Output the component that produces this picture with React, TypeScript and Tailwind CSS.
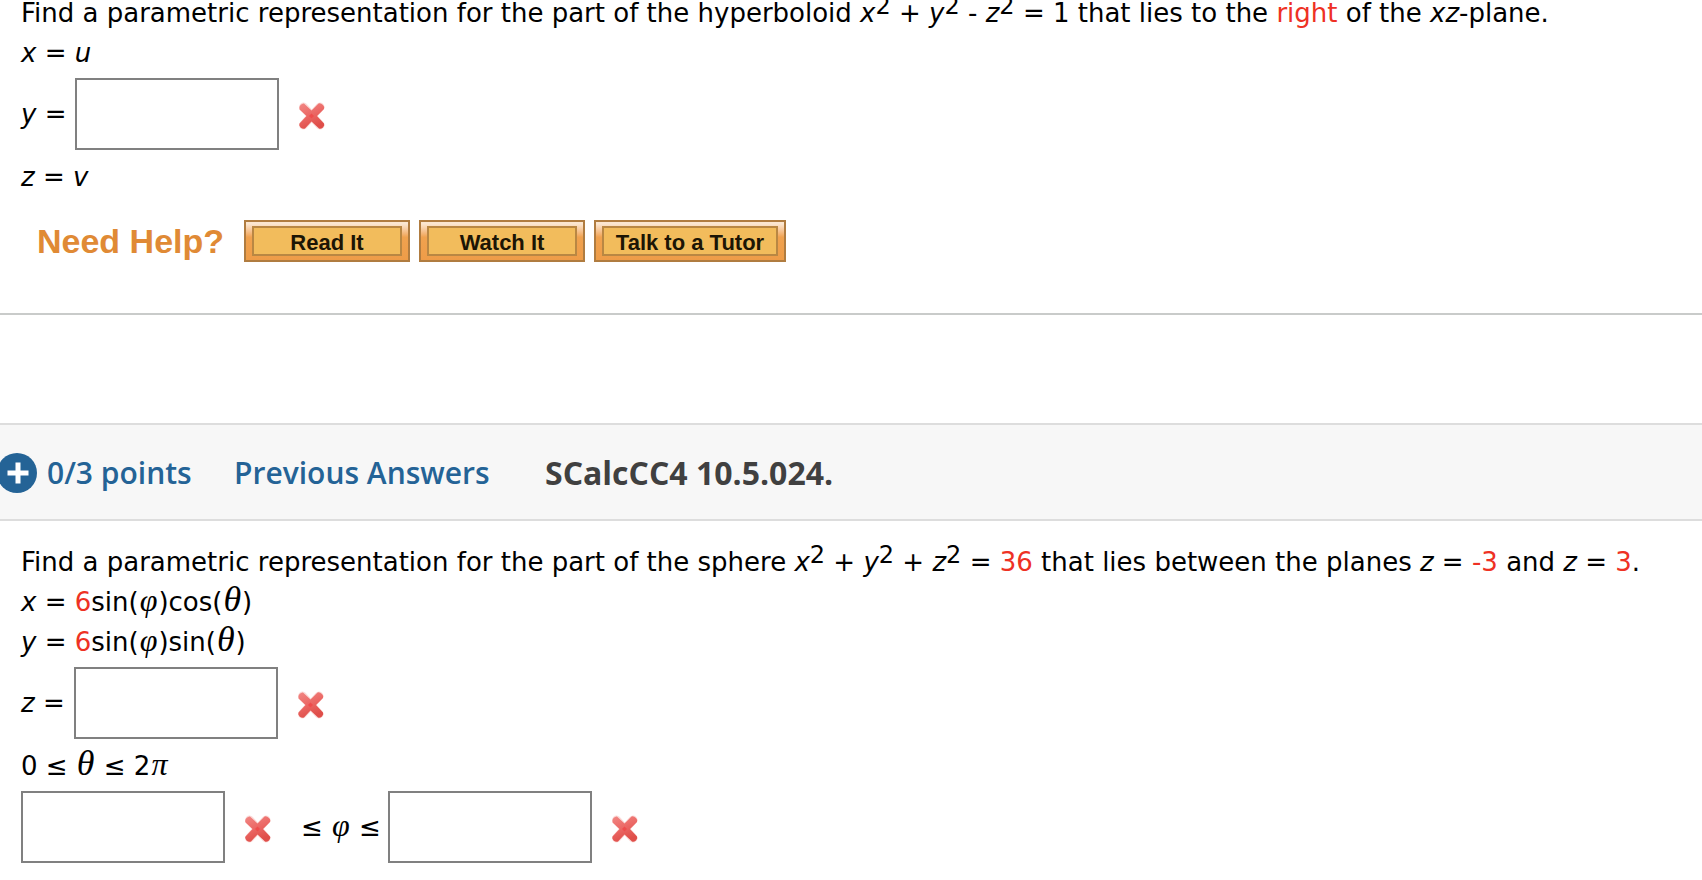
import type { ReactNode } from "react";

function Line({ children }: { children: ReactNode }) {
  return <p className="h-10 leading-10 whitespace-nowrap">{children}</p>;
}

function AnswerRow({ children }: { children: ReactNode }) {
  return <div className="flex items-center pt-[5px] pb-[7px] leading-10 whitespace-nowrap">{children}</div>;
}

function Red({ children }: { children: ReactNode }) {
  return <span className="text-[#ee3124]">{children}</span>;
}

function Sq() {
  return <span className="relative -top-2 text-[24px] leading-none">2</span>;
}

function Theta() {
  return <i className="px-px font-['Liberation_Serif',serif] text-[36px] leading-5">θ</i>;
}

function Greek({ children }: { children: ReactNode }) {
  return <i className="px-px font-['Liberation_Serif',serif] text-[32px] leading-5">{children}</i>;
}

function AnswerBox({ id, label }: { id: string; label?: string }) {
  return (
    <input
      id={id}
      type="text"
      aria-label={label}
      className="h-[72px] w-[204px] shrink-0 border-2 border-[#808080] bg-white px-3 outline-none"
    />
  );
}

function WrongMark() {
  return (
    <svg viewBox="0 0 28 30" className="mt-1 ml-[19px] h-[30px] w-7 shrink-0" role="img" aria-label="Incorrect">
      <defs>
        <linearGradient id="wrong" x1="0" y1="0" x2="0.4" y2="1">
          <stop offset="0" stopColor="#f28885" />
          <stop offset="0.55" stopColor="#eb6764" />
          <stop offset="1" stopColor="#df4e49" />
        </linearGradient>
      </defs>
      <path
        d="M5.5 6 L22 24 M22 6 L5.5 24"
        fill="none"
        stroke="#fbdcda"
        strokeWidth="9"
        strokeLinecap="round"
      />
      <path
        d="M6 2.5 L13.5 9.5 L20.5 2.5 Q22.5 1.5 25 4 Q27 6 26 8 L19 15 L26 22.5 Q27 24 25 26.5 Q22.5 28.5 21 27.5 L13.5 20.5 L7 27.5 Q5 28.5 2.5 26.5 Q0.5 24 1.5 22.5 L8.5 15 L1.5 8.5 Q0.5 6.5 2.5 4 Q4.5 2 6 2.5 Z"
        fill="url(#wrong)"
      />
      <path d="M11 15 L13.5 12.5 L16 15 L13.5 17.5 Z" fill="#ee4c4c" />
    </svg>
  );
}

function HelpButton({ children, wide }: { children: ReactNode; wide?: boolean }) {
  return (
    <button
      type="button"
      className={`${wide ? "w-48" : "w-[166px]"} flex h-[42px] border-2 border-[#b07c40] bg-linear-to-b from-[#fbe6d0] from-5% via-[#f0a24f] via-40% to-[#ee9c48] px-[6px] py-1`}
    >
      <span className="flex h-[30px] flex-1 items-center justify-center border-2 border-[#b98743] bg-[#f2bc5c] pt-1 font-['Liberation_Sans',sans-serif] text-[22px] leading-none font-bold whitespace-nowrap text-[#1c1505]">
        {children}
      </span>
    </button>
  );
}

export default function App() {
  return (
    <main className="overflow-hidden bg-white font-['DejaVu_Sans',sans-serif] text-[26px] text-black">
      <section className="-mt-[7px] pl-[21px]">
        <Line>
          Find a parametric representation for the part of the hyperboloid <i>x</i>
          <Sq /> + <i>y</i>
          <Sq /> - <i>z</i>
          <Sq /> = 1 that lies to the <Red>right</Red> of the <i>xz</i>-plane.
        </Line>
        <Line>
          <i>x</i> = <i>u</i>
        </Line>
        <AnswerRow>
          <label htmlFor="y1" className="w-[54px]">
            <i>y</i> =
          </label>
          <AnswerBox id="y1" />
          <WrongMark />
        </AnswerRow>
        <Line>
          <i>z</i> = <i>v</i>
        </Line>
        <div className="mt-[23px] flex items-center gap-[9px] pl-4">
          <h2 className="w-[198px] font-['Liberation_Sans',sans-serif] text-[34px] leading-10 font-bold whitespace-nowrap text-[#e08a35]">
            Need Help?
          </h2>
          <HelpButton>Read It</HelpButton>
          <HelpButton>Watch It</HelpButton>
          <HelpButton wide>Talk to a Tutor</HelpButton>
        </div>
      </section>

      <hr className="mt-[51px] border-t-2 border-[#c9cbca]" />

      <header className="mt-[108px] flex h-[98px] items-center border-y-2 border-[#dddddd] bg-[#f7f7f7] pt-[2px] font-['Open_Sans',sans-serif] text-[30px] leading-10 font-semibold whitespace-nowrap text-[#246396]">
        <button type="button" aria-label="Expand" className="-ml-[3px] shrink-0">
          <svg viewBox="0 0 40 40" className="size-10">
            <circle cx="20" cy="20" r="20" fill="#246396" />
            <path d="M21 12 V28 M13 20 H29" stroke="#fff" strokeWidth="5" strokeLinecap="square" strokeLinejoin="round" />
          </svg>
        </button>
        <a href="#points" className="ml-[10px] w-[187px]">
          0/3 points
        </a>
        <a href="#previous" className="w-[311px]">
          Previous Answers
        </a>
        <h2 className="text-[32px] font-bold text-[#404040]">SCalcCC4 10.5.024.</h2>
      </header>

      <section className="mt-[21px] pb-[11px] pl-[21px]">
        <Line>
          Find a parametric representation for the part of the sphere <i>x</i>
          <Sq /> + <i>y</i>
          <Sq /> + <i>z</i>
          <Sq /> = <Red>36</Red> that lies between the planes <i>z</i> = <Red>-3</Red> and <i>z</i> = <Red>3</Red>.
        </Line>
        <Line>
          <i>x</i> = <Red>6</Red>sin(<Greek>φ</Greek>)cos(<Theta />)
        </Line>
        <Line>
          <i>y</i> = <Red>6</Red>sin(<Greek>φ</Greek>)sin(<Theta />)
        </Line>
        <AnswerRow>
          <label htmlFor="z2" className="w-[53px]">
            <i>z</i> =
          </label>
          <AnswerBox id="z2" />
          <WrongMark />
        </AnswerRow>
        <Line>
          0 ≤ <Theta /> ≤ 2<Greek>π</Greek>
        </Line>
        <AnswerRow>
          <AnswerBox id="lower" label="Lower bound of φ" />
          <WrongMark />
          <label htmlFor="upper" className="ml-[29px] w-[87px]">
            ≤ <Greek>φ</Greek> ≤
          </label>
          <AnswerBox id="upper" />
          <WrongMark />
        </AnswerRow>
      </section>
    </main>
  );
}
